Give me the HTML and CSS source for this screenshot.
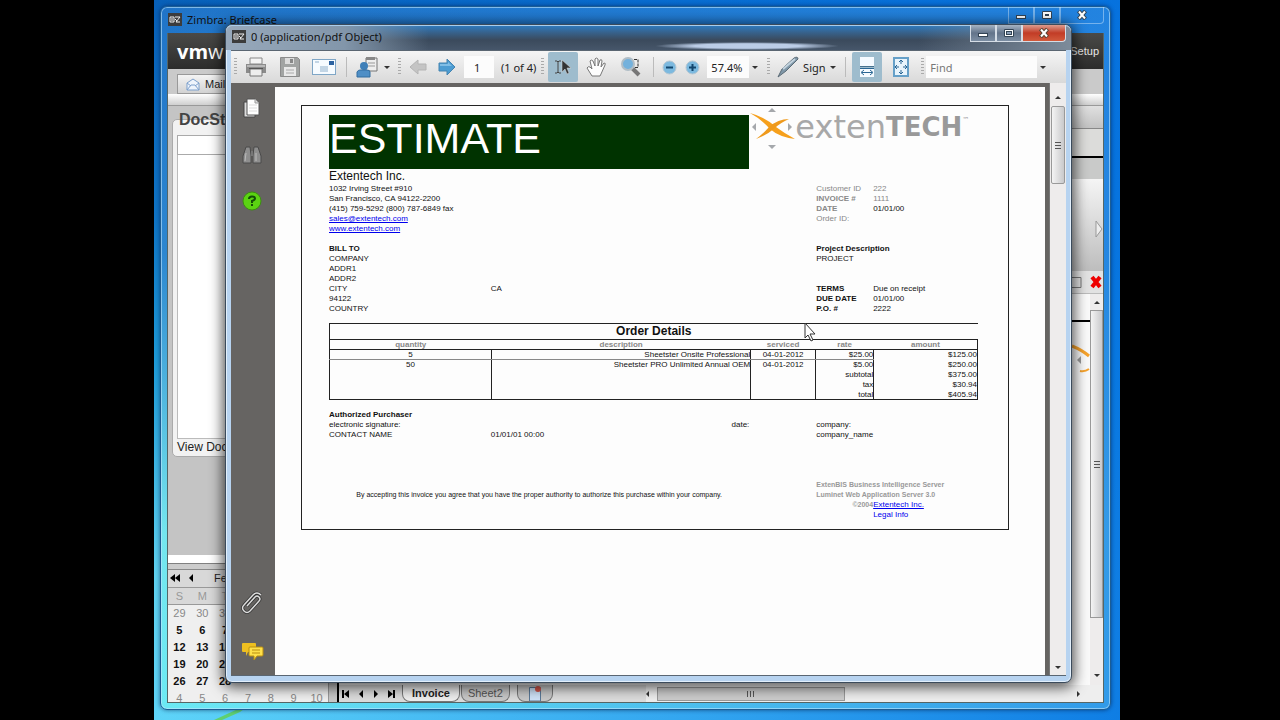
FILE: index.html
```
<!DOCTYPE html>
<html lang="en">
<head>
    <meta charset="utf-8">
    <title>0 (application/pdf Object)</title>
    <link rel="stylesheet" href="styles.css">
</head>
<body>
<div class="desktop">
    <svg class="leaf" width="60" height="14" viewBox="0 0 60 14"><path d="M0 14 L24 3 L34 0 L26 6 L8 14Z" fill="#5fd070"/></svg>

    <!-- browser window behind -->
    <div class="window back-window">
        <div class="titlebar">
            <svg class="app-icon" width="14" height="13" viewBox="0 0 14 13"><rect width="14" height="13" fill="#3c3c3c"/><path d="M2 4h4v5H2zM4 5v3M7 4h5L8 9h4M7 6l2 2" stroke="#eee" fill="none"/></svg>
            <span class="title-text">Zimbra: Briefcase</span>
            <div class="win-buttons">
                <button aria-label="Minimize"><svg width="12" height="10" viewBox="0 0 12 10"><rect x="1.500" y="5.500" width="9" height="3" fill="#fff" stroke="#345"/></svg></button>
                <button aria-label="Maximize"><svg width="12" height="10" viewBox="0 0 12 10"><path d="M1.500 1.500h9v7h-9z" stroke="#345" fill="#fff"/><rect x="4" y="4" width="4" height="2" fill="#345"/></svg></button>
                <button class="close" aria-label="Close"><svg width="12" height="10" viewBox="0 0 12 10"><path d="M2.500 1l7 8M9.500 1l-7 8" stroke="#345" stroke-width="4"/><path d="M3 1.500l6 7M9 1.500l-6 7" stroke="#fff" stroke-width="2"/></svg></button>
            </div>
        </div>
        <div class="back-page">
            <div class="brand-bar"><span class="brand"><b>vm</b>w</span><a class="setup" href="#">Setup</a></div>
            <div class="app-tabs">
                <button class="mail-tab"><svg width="14" height="13" viewBox="0 0 14 13"><path d="M1 5l6-4 6 4v7H1z" fill="#eef4fc" stroke="#7da0cc"/><path d="M1 12l4-5h4l4 5M1 5l4 3M13 5L9 8" fill="none" stroke="#7da0cc"/></svg>Mail</button>
            </div>
            <div class="gloss"></div>
            <div class="back-main">
                <div class="left-col">
                    <div class="doc-zone">
                        <div class="doc-panel">
                            <div class="doc-title">DocSt</div>
                            <div class="doc-head"></div>
                            <div class="doc-list"></div>
                            <div class="doc-view">View Doc</div>
                        </div>
                    </div>
                    <div class="split"></div>
                    <div class="cal-nav">
                        <button aria-label="Previous year"><svg width="10" height="8" viewBox="0 0 10 8"><path d="M5 0v8L0 4zM10 0v8L5 4z"/></svg></button>
                        <button aria-label="Previous month"><svg width="10" height="8" viewBox="0 0 10 8"><path d="M6 0v8L2 4z"/></svg></button>
                        <span>Fe</span>
                    </div>
                    <table class="calendar">
                        <tr><th>S</th><th>M</th><th>T</th><th>W</th><th>T</th><th>F</th><th>S</th></tr>
                        <tr class="other"><td>29</td><td>30</td><td>31</td><td></td><td></td><td></td><td></td></tr>
                        <tr><td>5</td><td>6</td><td>7</td><td></td><td></td><td></td><td></td></tr>
                        <tr><td>12</td><td>13</td><td>14</td><td></td><td></td><td></td><td></td></tr>
                        <tr><td>19</td><td>20</td><td>21</td><td></td><td></td><td></td><td></td></tr>
                        <tr><td>26</td><td>27</td><td>28</td><td></td><td></td><td></td><td></td></tr>
                        <tr class="other"><td>4</td><td>5</td><td>6</td><td>7</td><td>8</td><td>9</td><td>10</td></tr>
                    </table>
                </div>
                <div class="right-col">
                    <div class="strip strip-a"></div>
                    <div class="strip strip-b"></div>
                    <div class="strip strip-c"></div>
                    <div class="strip strip-d"><svg width="8" height="18" viewBox="0 0 8 18"><path d="M1 1l6 8-6 8z" fill="#eee" stroke="#999"/></svg></div>
                    <div class="strip strip-e">
                        <svg width="32" height="16" viewBox="0 0 32 16"><path d="M0 3.500h10v10H0" fill="none" stroke="#777"/><path d="M21 3l8 10M29 3l-8 10" stroke="#e00" stroke-width="4"/></svg>
                    </div>
                    <div class="sheet-view">
                        <div class="sheet-cells">
                            <div class="sheet-line"></div>
                            <svg class="swoosh" width="32" height="40" viewBox="0 0 32 40"><path d="M14 4Q24 8 31 14" stroke="#f7a32c" stroke-width="3" fill="none"/><path d="M22 29q5 1 9-2" stroke="#f7a32c" stroke-width="2" fill="none"/><path d="M23 14v8l-4-4z" fill="#999"/></svg>
                        </div>
                        <div class="scroll-v back-scroll">
                            <span class="arrow up"></span>
                            <div class="thumb"><i></i></div>
                            <span class="arrow down"></span>
                        </div>
                    </div>
                    <div class="sheet-tabs">
                        <button aria-label="First sheet"><svg width="8" height="8" viewBox="0 0 8 8"><path d="M0 0h2v8H0zM7 0v8L2 4z"/></svg></button>
                        <button aria-label="Previous sheet"><svg width="8" height="8" viewBox="0 0 8 8"><path d="M6 0v8L2 4z"/></svg></button>
                        <button aria-label="Next sheet"><svg width="8" height="8" viewBox="0 0 8 8"><path d="M2 0v8l4-4z"/></svg></button>
                        <button aria-label="Last sheet"><svg width="8" height="8" viewBox="0 0 8 8"><path d="M6 0h2v8H6zM1 0v8l5-4z"/></svg></button>
                        <div class="tabs">
                            <button class="tab on">Invoice</button>
                            <button class="tab">Sheet2</button>
                            <button class="tab add" aria-label="New sheet"><svg width="14" height="15" viewBox="0 0 14 15"><path d="M1.500 1.500h11V15h-11z" fill="#cfe2f7" stroke="#5a7896"/><circle cx="10" cy="3" r="3" fill="#d0564a"/></svg></button>
                        </div>
                        <div class="scroll-h"><span class="arrow left"></span><div class="thumb-h"><i></i></div><span class="arrow right"></span></div>
                    </div>
                </div>
            </div>
        </div>
    </div>

    <!-- pdf viewer window -->
    <div class="window pdf-window">
        <div class="titlebar">
            <svg class="app-icon" width="14" height="13" viewBox="0 0 14 13"><rect width="14" height="13" fill="#3c3c3c"/><path d="M2 4h4v5H2zM4 5v3M7 4h5L8 9h4M7 6l2 2" stroke="#eee" fill="none"/></svg>
            <span class="title-text">0 (application/pdf Object)</span>
            <div class="win-buttons">
                <button aria-label="Minimize"><svg width="12" height="10" viewBox="0 0 12 10"><rect x="1.500" y="5.500" width="9" height="3" fill="#fff" stroke="#345"/></svg></button>
                <button aria-label="Maximize"><svg width="12" height="10" viewBox="0 0 12 10"><path d="M1.500 1.500h9v7h-9z" stroke="#345" fill="#fff"/><rect x="3.500" y="3.500" width="5" height="3" fill="#8ba0b8" stroke="#345"/></svg></button>
                <button class="close" aria-label="Close"><svg width="12" height="10" viewBox="0 0 12 10"><path d="M2.500 1l7 8M9.500 1l-7 8" stroke="#543" stroke-width="4"/><path d="M3 1.500l6 7M9 1.500l-6 7" stroke="#fff" stroke-width="2"/></svg></button>
            </div>
        </div>
        <div class="viewer">
            <div class="toolbar">
                <span class="grip"></span>
                <button class="tool" aria-label="Print"><svg width="22" height="22" viewBox="0 0 22 22"><path d="M5 2h12v6H5z" fill="#f4f4f4" stroke="#888"/><path d="M1 8h20v9H1z" fill="#8b8b8b"/><path d="M2 9h18v2H2z" fill="#b9b9b9"/><path d="M5 13h12v7H5z" fill="#eee" stroke="#777"/><path d="M4 12h14v1H4z" fill="#555"/></svg></button>
                <button class="tool" aria-label="Save"><svg width="22" height="22" viewBox="0 0 22 22"><path d="M1.500 1.500h17l2 2v17h-19z" fill="#a2a4a3" stroke="#8c8c8c"/><path d="M6 2h9v6H6z" fill="#ddd"/><path d="M11 3h3v4h-3z" fill="#888"/><path d="M5 11h12v9H5z" fill="#e9e9e9"/><path d="M7 14h8M7 17h8" stroke="#aaa"/></svg></button>
                <button class="tool" aria-label="E-mail"><svg width="26" height="18" viewBox="0 0 26 18"><rect x="1.500" y="1.500" width="23" height="15" fill="#f6fbff" stroke="#7fa6c6"/><path d="M18 3h5v4h-5z" fill="#2c62a0"/><path d="M9 9h8M9 11h8M9 13h8M4 4h4" stroke="#8fb0cc"/></svg></button>
                <span class="sep"></span>
                <button class="tool share" aria-label="Share"><svg width="24" height="22" viewBox="0 0 24 22"><path d="M10 2h11v13H10z" fill="#eee" stroke="#777"/><path d="M10 1h9v3h-9z" fill="#888"/><path d="M12 7h7M12 10h7" stroke="#999"/><circle cx="8" cy="10" r="4" fill="#3e7fb8"/><path d="M1 21v-5q1-2 3-2h7q3 0 3 2v5z" fill="#4f8fc6" stroke="#336d9f"/></svg><i class="caret"></i></button>
                <span class="grip"></span>
                <button class="tool page-nav" aria-label="Previous page"><svg width="18" height="18" viewBox="0 0 18 18"><path d="M1 9l8-7v4h8v6H9v4z" fill="#c4c4c4" stroke="#b4b4b4"/></svg></button>
                <button class="tool page-nav" aria-label="Next page"><svg width="18" height="18" viewBox="0 0 18 18"><path d="M17 9L9 1v4H1v8h8v4z" fill="#4c9cd2" stroke="#4584b0"/><path d="M2 6h8V4l4 4H2z" fill="#80bee6"/></svg></button>
                <input class="page-input" type="text" value="1" aria-label="Page">
                <span class="page-count">(1 of 4)</span>
                <span class="grip"></span>
                <button class="tool pressed" aria-label="Select" aria-pressed="true"><svg width="20" height="18" viewBox="0 0 20 18"><path d="M2 3h2l1 1 1-1h2M5 4v10M2 15h2l1-1 1 1h2" fill="none" stroke="#444"/><path d="M9 2v12l3-3 2 5 2-1-2-5h4z" fill="#333" stroke="#ddd" stroke-width=".5"/></svg></button>
                <button class="tool" aria-label="Hand"><svg width="22" height="22" viewBox="0 0 22 22"><path d="M6 20L1 12q1-2 3-1l2 2L4 5q1-2 3 0l2 5V3q1-2 3 0v7l2-6q2-1 2 1l-1 6 3-4q2 0 1 2l-4 9-1 2z" fill="#fdfdfd" stroke="#777"/></svg></button>
                <button class="tool" aria-label="Marquee zoom"><svg width="22" height="22" viewBox="0 0 22 22"><path d="M6 3.500h12v8h-6" fill="none" stroke="#333" stroke-dasharray="3 1"/><path d="M12 12l7 7" stroke="#777" stroke-width="4"/><circle cx="8" cy="8" r="6" fill="#74b1dc" stroke="#b0bdc6" stroke-width="2"/></svg></button>
                <span class="sep"></span>
                <button class="tool round" aria-label="Zoom out"><svg width="15" height="15" viewBox="0 0 15 15"><circle cx="7.500" cy="7.500" r="6.500" fill="#7cb9df" stroke="#b5c7d3"/><path d="M4 7.500h7" stroke="#12466e" stroke-width="2"/></svg></button>
                <button class="tool round" aria-label="Zoom in"><svg width="15" height="15" viewBox="0 0 15 15"><circle cx="7.500" cy="7.500" r="6.500" fill="#7cb9df" stroke="#b5c7d3"/><path d="M4 7.500h7M7.500 4v7" stroke="#12466e" stroke-width="2"/></svg></button>
                <input class="zoom-input" type="text" value="57.4%" aria-label="Zoom">
                <button class="drop" aria-label="Zoom levels"><i class="caret"></i></button>
                <span class="grip"></span>
                <button class="tool sign"><svg width="22" height="22" viewBox="0 0 22 22"><path d="M1 21L5 13 17 2q4-2 4 1L9 15z" fill="#7f97a8" stroke="#5b6b76"/><path d="M6 13L18 3" stroke="#c3d3de" stroke-width="2"/></svg><span>Sign</span><i class="caret"></i></button>
                <span class="sep"></span>
                <button class="tool pressed" aria-label="Fit width" aria-pressed="true"><svg width="16" height="20" viewBox="0 0 16 20"><path d="M1 0h14v9H1z" fill="#f5faff"/><path d="M1 9.500h14" stroke="#47718e"/><path d="M1 12h14v8H1z" fill="#f5faff"/><path d="M1 11.500h14M3 15.500h10M5 13l-3 2.500L5 18M11 13l3 2.500L11 18" fill="none" stroke="#2a6694"/></svg></button>
                <button class="tool" aria-label="Fit page"><svg width="16" height="20" viewBox="0 0 16 20"><rect x="1" y="1" width="14" height="18" fill="#e8f4fc" stroke="#66a0c8" stroke-width="2"/><path d="M8 3v4M8 13v4M3 10h3M10 10h3M6 5l2-2 2 2M6 15l2 2 2-2M4 8l-2 2 2 2M12 8l2 2-2 2" fill="none" stroke="#2a6694"/></svg></button>
                <span class="grip"></span>
                <input class="find-input" type="text" placeholder="Find" aria-label="Find">
                <button class="drop" aria-label="Find options"><i class="caret"></i></button>
            </div>
            <div class="viewer-body">
                <div class="rail">
                    <button aria-label="Pages"><svg width="20" height="22" viewBox="0 0 20 22"><path d="M2 5h11v15H2z" fill="#ddd" stroke="#444"/><path d="M5 2h8l4 4v12H5z" fill="#fff" stroke="#555"/><path d="M13 2v4h4" fill="#ddd" stroke="#999"/><path d="M7 8h8M7 11h8M7 14h8" stroke="#ddd"/></svg></button>
                    <button aria-label="Search"><svg width="22" height="20" viewBox="0 0 22 20"><path d="M5 2h4l1 8v8H2v-7zM13 2h4l3 9v7h-8v-8z" fill="#8e8e8e" stroke="#4a4a4a"/><path d="M10 6h2v5h-2z" fill="#777"/><path d="M5 8l-1 8M15 8v8" stroke="#bbb"/></svg></button>
                    <button aria-label="Help"><svg width="20" height="20" viewBox="0 0 20 20"><circle cx="10" cy="10" r="9" fill="#5bd312" stroke="#3d8e12"/><path d="M7 8q0-2.500 3-2.500t3 2q0 1.500-3 2.500V12" fill="none" stroke="#134d08" stroke-width="2"/><path d="M9 13h2v2H9z" fill="#134d08"/></svg></button>
                    <span class="rail-space"></span>
                    <button aria-label="Attachments"><svg width="22" height="24" viewBox="0 0 22 24"><path d="M6 15l8-9q2-2 4 0t0 4L9 20q-3 3-6 0t0-6L12 4q4-4 8 0" fill="none" stroke="#333" stroke-width="3"/><path d="M6 15l8-9q2-2 4 0t0 4L9 20q-3 3-6 0t0-6L12 4q4-4 8 0" fill="none" stroke="#ddd" stroke-width="1.500"/></svg></button>
                    <button aria-label="Comments"><svg width="24" height="20" viewBox="0 0 24 20"><path d="M3 2h12q1 0 1 1v7q0 1-1 1H8l-2 4v-4H3q-1 0-1-1V3q0-1 1-1z" fill="#eebf20"/><path d="M10 6h12q1 0 1 1v7q0 1-1 1h-5l-3 4v-4h-4q-1 0-1-1V7q0-1 1-1z" fill="#ffe04a" stroke="#b98d10"/><path d="M12 9h8M12 12h8" stroke="#b98d10"/></svg></button>
                </div>
                <div class="document">
                    <div class="invoice">
                        <div class="invoice-top">
                            <h1>ESTIMATE</h1>
                            <div class="logo">
                                <svg width="46" height="42" viewBox="0 0 46 42"><path d="M1 5Q16 9 27 19Q35 25 46 31Q30 29 21 21Q12 11 1 5Z" fill="#f6a01c"/><path d="M40 11Q31 15 26 20Q18 27 7 31Q14 26 20 19Q29 11 40 11Z" fill="#ef9a1c"/><path d="M23 0l4 4h-8zM23 41l4-4h-8zM3 19l4-4v8zM43 19l-4-4v8z" fill="#a5a8ac"/></svg>
                                <span class="thin">exten</span><span class="heavy">TECH</span><span class="tm">™</span>
                            </div>
                        </div>
                        <div class="company">Extentech Inc.</div>
                        <div class="cells">
                            <div class="c1">1032 Irving Street #910</div><div class="c4 gray">Customer ID</div><div class="c5 gray">222</div>
                            <div class="c1">San Francisco, CA 94122-2200</div><div class="c4 gray"><b>INVOICE #</b></div><div class="c5 gray">1111</div>
                            <div class="c1">(415) 759-5292 (800) 787-6849 fax</div><div class="c4 gray"><b>DATE</b></div><div class="c5">01/01/00</div>
                            <div class="c1"><a href="#">sales@extentech.com</a></div><div class="c4 gray">Order ID:</div>
                            <div class="c1"><a href="#">www.extentech.com</a></div>
                            <div class="c1"></div>
                            <div class="c1"><b>BILL TO</b></div><div class="c4"><b>Project Description</b></div>
                            <div class="c1">COMPANY</div><div class="c4">PROJECT</div>
                            <div class="c1">ADDR1</div>
                            <div class="c1">ADDR2</div>
                            <div class="c1">CITY</div><div class="c2">CA</div><div class="c4"><b>TERMS</b></div><div class="c5">Due on receipt</div>
                            <div class="c1">94122</div><div class="c4"><b>DUE DATE</b></div><div class="c5">01/01/00</div>
                            <div class="c1">COUNTRY</div><div class="c4"><b>P.O. #</b></div><div class="c5">2222</div>
                        </div>
                        <table class="order">
                            <colgroup><col class="w1"><col class="w2"><col class="w3"><col class="w4"><col class="w5"></colgroup>
                            <tr class="order-title"><th colspan="5">Order Details</th></tr>
                            <tr class="order-head"><th>quantity</th><th>description</th><th>serviced</th><th>rate</th><th>amount</th></tr>
                            <tr class="line"><td>5</td><td>Sheetster Onsite Professional</td><td>04-01-2012</td><td>$25.00</td><td>$125.00</td></tr>
                            <tr><td>50</td><td>Sheetster PRO Unlimited Annual OEM</td><td>04-01-2012</td><td>$5.00</td><td>$250.00</td></tr>
                            <tr><td></td><td></td><td></td><td>subtotal</td><td>$375.00</td></tr>
                            <tr><td></td><td></td><td></td><td>tax</td><td>$30.94</td></tr>
                            <tr><td></td><td></td><td></td><td>total</td><td>$405.94</td></tr>
                        </table>
                        <div class="cells sign-off">
                            <div class="c1"><b>Authorized Purchaser</b></div>
                            <div class="c1">electronic signature:</div><div class="c2 right">date:</div><div class="c4">company:</div>
                            <div class="c1">CONTACT NAME</div><div class="c2">01/01/01 00:00</div><div class="c4">company_name</div>
                        </div>
                        <div class="cells legal">
                            <div class="c4 fine">ExtenBIS Business Intelligence Server</div>
                            <div class="note">By accepting this invoice you agree that you have the proper authority to authorize this purchase within your company.</div><div class="c4 fine">Luminet Web Application Server 3.0</div>
                            <div class="c4 fine right">©2004</div><div class="c5"><a href="#">Extentech Inc.</a></div>
                            <div class="c5"><a class="plain" href="#">Legal Info</a></div>
                        </div>
                    </div>
                </div>
                <div class="scroll-v pdf-scroll">
                    <span class="arrow up"></span>
                    <div class="thumb"><i></i></div>
                    <span class="arrow down"></span>
                </div>
            </div>
        </div>
    </div>

    <svg class="cursor" width="13" height="20" viewBox="0 0 13 20"><path d="M1 1v15l3-3 3 6 2-1-3-6h5z" fill="#fff" stroke="#333"/></svg>
</div>
</body>
</html>
```
FILE: styles.css
```
* {
    box-sizing: border-box;
}
body {
    margin: 0;
    background: #000;
    font-family: "Liberation Sans", Arial, sans-serif;
    font-size: 11px;
    color: #222;
}
button {
    border: none;
    background: none;
    padding: 0;
    font-family: inherit;
    display: flex;
    align-items: center;
    justify-content: center;
}
svg {
    flex: none;
    display: block;
}

.desktop {
    position: relative;
    height: 100vh;
    margin: 0 160px 0 154px;
    overflow: hidden;
    background: linear-gradient(90deg, rgba(8, 120, 232, 0) 0%, rgba(8, 120, 232, 0.5) 55%, rgba(6, 116, 226, 0.9) 100%), linear-gradient(#0860b8 0%, #0f74c6 30%, #1d9bd8 50%, #5fd2f0 80%, #5ed4f8 100%);
}
.leaf {
    position: absolute;
    left: 60px;
    bottom: 0;
}

/* windows */
.window {
    position: absolute;
    display: flex;
    flex-direction: column;
    border-radius: 7px;
}
.back-window {
    top: 6px;
    right: 9px;
    bottom: 10px;
    left: 6px;
    padding: 0 6px 6px;
    border: 1px solid #1c5d94;
    background: linear-gradient(90deg, rgba(35, 140, 240, 0) 0%, rgba(35, 135, 230, 0.8) 100%), linear-gradient(#2074c8 0%, #2c86d0 35%, #74e6ee 75%, #6ceaf4 100%);
    box-shadow: inset 0 0 0 1px rgba(190, 230, 255, 0.6), 0 0 4px rgba(0, 20, 60, 0.6);
}
.pdf-window {
    top: 24px;
    right: 48px;
    bottom: 37px;
    left: 71px;
    padding: 0 5px 6px;
    border: 1px solid #3b4b5c;
    background: #b7d3f0;
    box-shadow: inset 0 0 0 1px #e2effb, 0 2px 14px 2px rgba(0, 0, 0, 0.7);
}
.titlebar {
    display: flex;
    align-items: center;
    flex: none;
    height: 26px;
    font-family: "Noto Sans", "Open Sans", sans-serif;
    font-size: 11px;
    color: #111;
}
.app-icon {
    margin: 0 5px 0 1px;
}
.back-window .titlebar {
    padding-bottom: 2px;
}
.pdf-window .titlebar {
    height: 25px;
    margin: 0 -5px;
    padding: 0 5px 2px;
    border-radius: 6px 6px 0 0;
    box-shadow: inset 0 1px #a9cdec;
    background: radial-gradient(ellipse, rgba(200, 218, 245, 0.9) 40%, rgba(200, 218, 245, 0) 70%) 65% 100% / 22% 8px no-repeat, linear-gradient(90deg, #98a9bb 0%, #8296aa 14%, rgba(130, 150, 170, 0) 24%, rgba(130, 150, 170, 0) 82%, #7d8b9a 100%), linear-gradient(#2e7cc2 0%, #37628c 30%, #3b4a5c 60%, #46566a 100%);
}
.win-buttons {
    display: flex;
    align-self: flex-start;
    margin-left: auto;
}
.win-buttons button {
    width: 26px;
    height: 17px;
    border: 1px solid rgba(200, 225, 250, 0.5);
    border-top: none;
}
.win-buttons .close {
    width: 44px;
    border-radius: 0 0 4px 0;
}
.pdf-window .win-buttons button {
    border-color: #d5dde6;
    background: linear-gradient(#a5b3c3, #63748a 50%, #7c8ea3);
}
.pdf-window .win-buttons .close {
    background: linear-gradient(#dc9c8e, #c23c26 50%, #d25a3c);
}

/* page in the back window */
.back-page {
    flex: 1;
    min-height: 0;
    display: flex;
    flex-direction: column;
    border: 1px solid #566;
    border-width: 0 1px 1px;
    overflow: hidden;
    background: #c9c9c9;
}
.brand-bar {
    flex: none;
    height: 36px;
    display: flex;
    align-items: center;
    justify-content: space-between;
    padding: 0 4px 0 9px;
    background: linear-gradient(#4a4a48, #2c2c2b);
    color: #fff;
}
.brand {
    font-family: "Open Sans", sans-serif;
    font-size: 20px;
}
.setup {
    color: #e8e8e8;
    text-decoration: none;
}
.app-tabs {
    flex: none;
    height: 25px;
    padding: 5px 0 0 9px;
    background: #cacaca;
}
.mail-tab {
    height: 20px;
    width: 60px;
    justify-content: flex-start;
    gap: 5px;
    padding-left: 8px;
    border: 1px solid #999;
    background: linear-gradient(#f4f4f4, #d2d2d2);
    font-size: 11px;
    color: #222;
}
.gloss {
    flex: none;
    height: 12px;
    border-bottom: 1px solid #999;
    background: linear-gradient(#fff, #cfcfcf);
}
.back-main {
    flex: 1;
    min-height: 0;
    display: flex;
}
.left-col {
    flex: none;
    width: 161px;
    display: flex;
    flex-direction: column;
    background: #efefef;
    border-right: 1px solid #999;
}
.doc-zone {
    flex: 1;
    padding: 13px 0 98px 4px;
    background: #c4c4c4;
}
.doc-panel {
    height: 100%;
    display: flex;
    flex-direction: column;
    border: 1px solid #aaa;
    border-radius: 5px;
    background: #f2f2f2;
}
.doc-title {
    height: 16px;
    margin: -9px 0 8px 6px;
    font-size: 16px;
    font-weight: bold;
    color: #444;
}
.doc-head {
    height: 20px;
    margin-left: 4px;
    border: 1px solid #aaa;
    border-right: none;
    background: #fff;
}
.doc-list {
    flex: 1;
    margin-left: 4px;
    border-left: 1px solid #bbb;
    border-bottom: 1px solid #bbb;
    background: #fff;
}
.doc-view {
    padding: 0 4px;
    font-size: 12px;
    line-height: 17px;
}
.split {
    height: 15px;
    border-bottom: 1px solid #888;
    background: linear-gradient(#fff 60%, #777 60%, #ccc 67%);
}
.cal-nav {
    height: 17px;
    display: flex;
    align-items: center;
    gap: 7px;
    padding-left: 2px;
    background: #d8d8d8;
}
.cal-nav span {
    margin-left: 10px;
}
.calendar {
    width: 100%;
    margin-bottom: -4px;
    table-layout: fixed;
    border-collapse: collapse;
    text-align: center;
    font-size: 11px;
    font-weight: bold;
    color: #111;
}
.calendar td,
.calendar th {
    height: 17px;
    padding: 0;
}
.calendar th {
    border: 1px solid #999;
    border-width: 1px 0;
    background: #d8d8d8;
    color: #999;
    font-weight: normal;
}
.calendar .other {
    color: #888;
    font-weight: normal;
}
.right-col {
    flex: 1;
    min-width: 0;
    display: flex;
    flex-direction: column;
    margin-left: 8px;
    background: #ddd;
}
.strip {
    flex: none;
}
.strip-a {
    height: 23px;
    border-bottom: 1px solid #888;
    background: linear-gradient(#e0e0e0, #c2c2c2);
}
.strip-b {
    height: 29px;
    border-bottom: 2px solid #000;
    background: #dcdcda;
}
.strip-c {
    height: 21px;
    background: #c9cac9;
}
.strip-d {
    height: 92px;
    padding-top: 8px;
    display: flex;
    align-items: center;
    justify-content: flex-end;
    background: linear-gradient(#f5f5f5, #bdbdbd);
}
.strip-e {
    height: 23px;
    display: flex;
    align-items: center;
    justify-content: flex-end;
    border-bottom: 1px solid #bbb;
    background: #e2e2e2;
}
.sheet-view {
    flex: 1;
    min-height: 0;
    display: flex;
}
.sheet-cells {
    flex: 1;
    display: flex;
    flex-direction: column;
    align-items: flex-end;
    border-left: 2px solid #000;
    background: #fafafa;
}
.sheet-line {
    width: 100%;
    height: 28px;
    border-bottom: 2px solid #000;
}
.swoosh {
    margin-top: 20px;
}
.sheet-tabs {
    flex: none;
    height: 17px;
    display: flex;
    align-items: center;
    gap: 7px;
    padding-left: 3px;
    border-left: 2px solid #000;
    background: #dcdcdc;
}
.tabs {
    display: flex;
    gap: 1px;
}
.tab {
    height: 17px;
    padding: 0 6px;
    border: 1px solid #777;
    border-top: none;
    border-radius: 0 0 8px 8px;
    background: #c8c8c8;
    font-size: 11px;
    color: #555;
}
.tab.on {
    padding: 0 9px;
    background: #eee;
    font-weight: bold;
    color: #222;
}
.tab.add {
    width: 36px;
    margin-left: 6px;
}
.scroll-h {
    flex: 1;
    display: flex;
    align-items: center;
    height: 17px;
    margin-left: 86px;
    padding: 0 23px 0 0;
    background: #eee;
}
.scroll-h .right {
    margin-left: auto;
}
.thumb-h {
    width: 188px;
    height: 14px;
    margin-left: 8px;
    display: flex;
    align-items: center;
    justify-content: center;
    border: 1px solid #999;
    background: #ccc;
}
.thumb-h i {
    width: 7px;
    height: 6px;
    background: repeating-linear-gradient(90deg, #555 0 1px, transparent 1px 3px);
}

/* scrollbars and arrows */
.scroll-v {
    flex: none;
    display: flex;
    flex-direction: column;
    align-items: center;
    background: #eeecec;
}
.thumb {
    display: flex;
    align-items: center;
    justify-content: center;
    width: 100%;
    border: 1px solid #999;
    background: linear-gradient(90deg, #f4f4f4, #c9c9cb);
}
.thumb i {
    width: 6px;
    height: 7px;
    background: repeating-linear-gradient(#555 0 1px, transparent 1px 3px);
}
.arrow,
.caret {
    flex: none;
    width: 0;
    height: 0;
    border: 3px solid transparent;
}
.arrow.up {
    border-top: none;
    border-bottom-color: #333;
}
.arrow.down,
.caret {
    border-bottom: none;
    border-top-color: #333;
}
.arrow.left {
    border-left: none;
    border-right-color: #333;
}
.arrow.right {
    border-right: none;
    border-left-color: #333;
}
.scroll-v .down {
    margin-top: auto;
}
.back-scroll {
    width: 13px;
    padding: 7px 0 8px;
}
.back-scroll .thumb {
    height: 308px;
    margin-top: 6px;
}
.pdf-scroll {
    width: 17px;
    padding: 13px 1px 6px;
    border-left: 1px solid #777;
}
.pdf-scroll .thumb {
    height: 78px;
    margin-top: 7px;
    border-radius: 2px;
}

/* viewer */
.viewer {
    flex: 1;
    min-height: 0;
    display: flex;
    flex-direction: column;
    border: 1px solid #5a6672;
    border-width: 1px 0;
}
.toolbar {
    flex: none;
    display: flex;
    align-items: center;
    height: 32px;
    overflow: hidden;
    background: linear-gradient(#f5f5f5, #d9d9d9);
    font-family: "Noto Sans", "Open Sans", sans-serif;
    font-size: 11px;
    color: #222;
}
.toolbar > * {
    flex: none;
}
.grip {
    width: 8px;
    height: 18px;
    background: repeating-linear-gradient(#aaa 0 1px, transparent 1px 3px) center / 3px 100% no-repeat;
}
.sep {
    width: 10px;
    height: 20px;
    background: linear-gradient(#bbb, #bbb) center / 1px 100% no-repeat;
}
.tool {
    width: 34px;
    height: 30px;
}
.share {
    width: 44px;
    gap: 4px;
}
.page-nav {
    width: 29px;
}
.pressed {
    width: 30px;
    margin: 0 2px;
    border-radius: 2px;
    background: #9ebccd;
}
.round {
    width: 23px;
}
.sign {
    width: 68px;
    gap: 4px;
    font-size: 11px;
    color: #222;
}
.toolbar input {
    height: 22px;
    padding: 0 4px;
    border: none;
    background: #fcfcfc;
    font-family: inherit;
    font-size: 11px;
    color: #222;
}
.toolbar .page-input {
    width: 30px;
    margin-left: 3px;
    padding: 0 10px;
}
.page-count {
    margin: 0 2px 0 7px;
}
.toolbar .zoom-input {
    width: 42px;
    margin-left: 3px;
}
.drop {
    width: 12px;
    height: 22px;
    margin-right: 3px;
}
.toolbar .find-input {
    width: 111px;
}
.find-input::placeholder {
    color: #777;
}
.viewer-body {
    flex: 1;
    min-height: 0;
    display: flex;
    background: #666462;
}
.rail {
    flex: none;
    width: 44px;
    display: flex;
    flex-direction: column;
    align-items: center;
    gap: 26px;
    padding: 14px 2px 14px 0;
}
.rail-space {
    flex: 1;
}
.document {
    flex: 1;
    min-width: 0;
    margin: 4px 4px 0 0;
    padding: 18px 36px 0 26px;
    background: #fdfdfd;
    overflow: hidden;
}

/* invoice */
.invoice {
    padding: 0 30px 9px 27px;
    border: 1px solid #222;
    font-size: 8px;
    line-height: 10px;
    color: #111;
}
.invoice-top {
    display: flex;
    height: 63px;
}
.invoice h1 {
    flex: 421;
    height: 54px;
    margin: 9px 0 0;
    background: #003300;
    color: #fff;
    font-size: 43px;
    font-weight: normal;
    line-height: 46px;
}
.logo {
    flex: 229;
    min-width: 0;
    display: flex;
    align-items: flex-start;
    margin-top: 2px;
    color: #999;
    font-family: "DejaVu Sans", sans-serif;
    line-height: 38px;
    white-space: nowrap;
}
.thin {
    font-size: 32px;
    color: #a8a8a8;
}
.heavy {
    font-size: 26px;
    font-weight: bold;
}
.tm {
    font-size: 7px;
    line-height: 24px;
}
.company {
    font-size: 12px;
    line-height: 15px;
}
.cells {
    display: grid;
    grid-template-columns: 162fr 259fr 67fr 57fr 105fr;
    grid-auto-rows: 10px;
    white-space: nowrap;
}
.cells > * {
    min-width: 0;
}
.c1 {
    grid-column: 1;
}
.c2 {
    grid-column: 2;
}
.c4 {
    grid-column: 4;
}
.c5 {
    grid-column: 5;
}
.gray {
    color: #888;
}
.right {
    text-align: right;
}
.invoice a {
    color: #0000ee;
}
.invoice a.plain {
    text-decoration: none;
}
.order {
    width: 100%;
    margin-top: 9px;
    table-layout: fixed;
    border-collapse: collapse;
    border-left: 1px solid #222;
    border-bottom: 1px solid #222;
    line-height: 9px;
}
.w1 { width: 25%; }
.w2 { width: 40%; }
.w3 { width: 10%; }
.w4 { width: 9%; }
.w5 { width: 16%; }
.order th,
.order td {
    height: 10px;
    padding: 0;
    text-align: right;
    white-space: nowrap;
}
.order th,
.order td:first-child,
.order td:nth-child(3) {
    text-align: center;
}
.order td {
    border-right: 1px solid #222;
}
.order .order-title th {
    height: 16px;
    border-top: 1px solid #222;
    font-size: 12px;
}
.order-head th {
    border-top: 1px solid #222;
    border-bottom: 1px solid #222;
    color: #888;
}
.order-head th:last-child {
    border-right: 1px solid #222;
}
.line td {
    border-bottom: 1px solid #888;
}
.line td:last-child {
    border-bottom: none;
}
.sign-off {
    margin-top: 10px;
}
.legal {
    margin-top: 40px;
}
.note {
    grid-column: 1 / 3;
    text-align: center;
    font-size: 7px;
}
.fine {
    color: #999;
    font-size: 7px;
    font-weight: bold;
}
.fine.right {
    text-align: right;
}

.cursor {
    position: absolute;
    left: 650px;
    top: 322px;
}
```
